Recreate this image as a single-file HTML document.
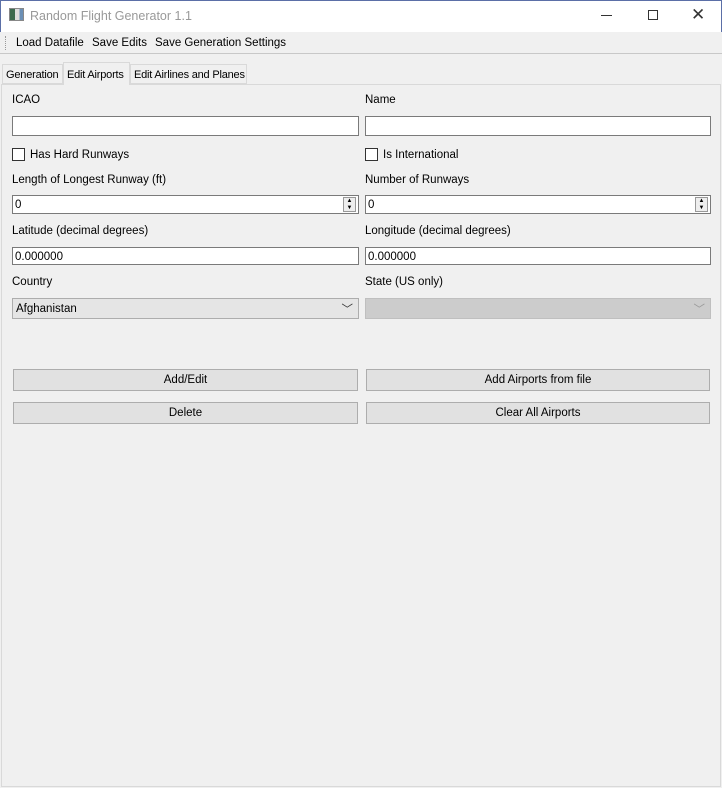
<!DOCTYPE html>
<html><head><style>
*{box-sizing:border-box;margin:0;padding:0}
body{width:722px;height:788px;background:#f0f0f0;font-family:"Liberation Sans",sans-serif;font-size:11.5px;color:#000;position:relative;overflow:hidden;white-space:nowrap}
.a{position:absolute}
.inp{position:absolute;background:#fff;border:1px solid #7a7a7a;height:20px;padding:3px 2px;font-size:11.5px}
.lbl{position:absolute;font-size:11.5px}
.btn{position:absolute;background:#e1e1e1;border:1px solid #adadad;height:22px;text-align:center;line-height:21px}
.cb{position:absolute;width:13px;height:13px;border:1px solid #333;background:#fff}
.spin{position:absolute;right:2px;top:1px;width:13px;height:15px;border:1px solid #999;background:#eee;font-size:6px;line-height:7px;text-align:center}
.tab{position:absolute;border:1px solid #d9d9d9;background:#f0f0f0;font-size:11px;letter-spacing:-0.2px}
</style></head><body>
<div class="a" style="left:0;top:0;width:722px;height:32px;background:#fff;border:1px solid #5b6fa7;border-bottom:none"></div>
<div class="a" style="left:9px;top:8px;width:15px;height:13px;border:1px solid #888;background:linear-gradient(90deg,#3c6a4e 0 40%,#ddd 40% 75%,#6b8fb5 75%)"></div>
<div class="lbl" style="left:30px;top:9px;font-size:12.5px;color:#999">Random Flight Generator 1.1</div>
<div class="a" style="left:601px;top:15px;width:11px;height:1px;background:#333"></div>
<div class="a" style="left:648px;top:10px;width:10px;height:10px;border:1px solid #333"></div>
<div class="lbl" style="left:691px;top:5px;font-size:17px;color:#333">✕</div>
<div class="a" style="left:0;top:32px;width:722px;height:22px;border-bottom:1px solid #c8c8c8"></div>
<div class="a" style="left:5px;top:36px;width:1px;height:14px;border-left:1px dotted #999"></div>
<div class="lbl" style="left:16px;top:37px">Load Datafile</div>
<div class="lbl" style="left:92px;top:37px">Save Edits</div>
<div class="lbl" style="left:155px;top:37px">Save Generation Settings</div>
<div class="a" style="left:1px;top:84px;width:720px;height:703px;border:1px solid #d9d9d9;background:#f0f0f0"></div>
<div class="tab" style="left:2px;top:64px;width:61px;height:20px;padding:4px 3px">Generation</div>
<div class="tab" style="left:63px;top:62px;width:67px;height:23px;border-bottom:none;padding:6px 3px">Edit Airports</div>
<div class="tab" style="left:130px;top:64px;width:117px;height:20px;padding:4px 3px">Edit Airlines and Planes</div>
<div class="lbl" style="left:12px;top:94px">ICAO</div>
<div class="lbl" style="left:365px;top:94px">Name</div>
<div class="inp" style="left:12px;top:116px;width:347px"></div>
<div class="inp" style="left:365px;top:116px;width:346px"></div>
<div class="cb" style="left:12px;top:148px"></div><div class="lbl" style="left:30px;top:149px">Has Hard Runways</div>
<div class="cb" style="left:365px;top:148px"></div><div class="lbl" style="left:383px;top:149px">Is International</div>
<div class="lbl" style="left:12px;top:174px">Length of Longest Runway (ft)</div>
<div class="lbl" style="left:365px;top:174px">Number of Runways</div>
<div class="inp" style="left:12px;top:195px;width:347px;height:19px;padding-top:3px">0<div class="spin">▲<br>▼</div></div>
<div class="inp" style="left:365px;top:195px;width:346px;height:19px;padding-top:3px">0<div class="spin">▲<br>▼</div></div>
<div class="lbl" style="left:12px;top:225px">Latitude (decimal degrees)</div>
<div class="lbl" style="left:365px;top:225px">Longitude (decimal degrees)</div>
<div class="inp" style="left:12px;top:247px;width:347px;height:18px;padding-top:3px">0.000000</div>
<div class="inp" style="left:365px;top:247px;width:346px;height:18px;padding-top:3px">0.000000</div>
<div class="lbl" style="left:12px;top:276px">Country</div>
<div class="lbl" style="left:365px;top:276px">State (US only)</div>
<div class="inp" style="left:12px;top:298px;width:347px;height:21px;background:#e5e5e5;border-color:#adadad;padding:4px 3px">Afghanistan<span class="a" style="right:5px;top:2px;color:#333">﹀</span></div>
<div class="inp" style="left:365px;top:298px;width:346px;height:21px;background:#cccccc;border-color:#bfbfbf"><span class="a" style="right:5px;top:2px;color:#999">﹀</span></div>
<div class="btn" style="left:13px;top:369px;width:345px">Add/Edit</div>
<div class="btn" style="left:366px;top:369px;width:344px">Add Airports from file</div>
<div class="btn" style="left:13px;top:402px;width:345px">Delete</div>
<div class="btn" style="left:366px;top:402px;width:344px">Clear All Airports</div>
</body></html>
